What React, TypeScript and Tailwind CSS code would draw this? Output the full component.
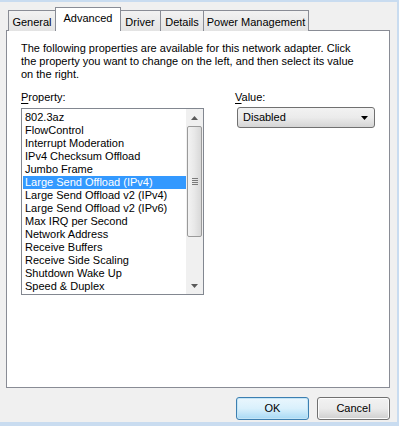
import React from "react";

const items = [
  "802.3az",
  "FlowControl",
  "Interrupt Moderation",
  "IPv4 Checksum Offload",
  "Jumbo Frame",
  "Large Send Offload (IPv4)",
  "Large Send Offload v2 (IPv4)",
  "Large Send Offload v2 (IPv6)",
  "Max IRQ per Second",
  "Network Address",
  "Receive Buffers",
  "Receive Side Scaling",
  "Shutdown Wake Up",
  "Speed & Duplex",
];

const tabs: { t: string; w: string }[] = [
  { t: "General", w: "w-[48px]" },
  { t: "Advanced", w: "w-[66px]" },
  { t: "Driver", w: "w-[42px]" },
  { t: "Details", w: "w-[44px]" },
  { t: "Power Management", w: "w-[106px]" },
];

export default function App() {
  return (
    <div
      className="w-[399px] h-[426px] bg-[#f0f0f0] relative overflow-hidden text-[11px] text-black"
      style={{ fontFamily: '"Liberation Sans", Arial, sans-serif' }}
    >
      <div className="h-[2px] bg-[#c9dcf0]" />
      <div className="absolute right-0 top-0 bottom-0 w-[2px] bg-[#c9dcf0]" />
      <div className="absolute left-0 right-0 bottom-0 h-[4px] bg-[#c9dcf0]" />

      <div className="pl-[6px] pr-[9px] pt-[5px]">
        {/* tabs */}
        <div className="flex items-end h-[24px] pl-[2px] relative z-10">
          {tabs.map(({ t, w }) =>
            t === "Advanced" ? (
              <div
                key={t}
                className={
                  w +
                  " h-[24px] -ml-[1px] -mr-[1px] border border-b-0 border-[#898c95] bg-white flex justify-center items-start pt-[3px] leading-[14px] relative z-10"
                }
              >
                {t}
              </div>
            ) : (
              <div
                key={t}
                className={
                  w +
                  " h-[21px] border border-b-0 border-[#898c95] bg-gradient-to-b from-[#f2f2f2] to-[#e3e3e3] flex justify-center items-center pt-[1px] leading-[14px] -ml-[1px] first:ml-0"
                }
              >
                {t}
              </div>
            )
          )}
        </div>
        {/* panel */}
        <div className="h-[358px] -mt-[1px] border border-[#898c95] bg-white px-[14px] pt-[11px]">
          <p className="leading-[13px] whitespace-nowrap">
            The following properties are available for this network adapter. Click
            <br />
            the property you want to change on the left, and then select its value
            <br />
            on the right.
          </p>
          <div className="flex mt-[10px]">
            <div className="w-[187px]">
              <div className="leading-[13px] h-[13px]">
                <span className="underline underline-offset-[2px]">P</span>roperty:
              </div>
              <div className="mt-[4px] h-[187px] border border-[#828790] flex">
                <div className="flex-1 pt-[2px] pl-[1px]">
                  {items.map((it) => (
                    <div
                      key={it}
                      className={
                        "h-[13px] leading-[13px] pl-[2px] whitespace-nowrap " +
                        (it === "Large Send Offload (IPv4)" ? "bg-[#3399ff] text-white" : "")
                      }
                    >
                      {it}
                    </div>
                  ))}
                </div>
                <div className="w-[17px] bg-[#f0f0f0] flex flex-col">
                  <div className="h-[17px] flex items-center justify-center">
                    <svg width="7" height="4" viewBox="0 0 7 4">
                      <path d="M3.5 0 L7 4 L0 4 Z" fill="#5a5a5a" />
                    </svg>
                  </div>
                  <div className="h-[111px] mx-[1px] border border-[#9a9a9a] rounded-[2px] bg-gradient-to-r from-[#f3f3f3] via-[#e8e8e8] to-[#d8d8d8] flex items-center justify-center">
                    <div className="flex flex-col gap-[1px]">
                      <div className="w-[6px] h-[1px] bg-[#7a7a7a]" />
                      <div className="w-[6px] h-[1px] bg-[#7a7a7a]" />
                      <div className="w-[6px] h-[1px] bg-[#7a7a7a]" />
                      <div className="w-[6px] h-[1px] bg-[#7a7a7a]" />
                    </div>
                  </div>
                  <div className="flex-1" />
                  <div className="h-[17px] flex items-center justify-center">
                    <svg width="7" height="4" viewBox="0 0 7 4">
                      <path d="M0 0 L7 0 L3.5 4 Z" fill="#5a5a5a" />
                    </svg>
                  </div>
                </div>
              </div>
            </div>
            <div className="ml-[33px]">
              <div className="leading-[13px] h-[13px] -ml-[2px]">
                <span className="underline underline-offset-[2px]">V</span>alue:
              </div>
              <div className="mt-[3px] w-[138px] h-[21px] border border-[#707070] rounded-[3px] bg-gradient-to-b from-[#f2f2f2] via-[#ebebeb] to-[#d5d5d5] flex items-center pl-[5px] pr-[6px]">
                <span className="flex-1 leading-[13px]">Disabled</span>
                <svg width="7" height="4" viewBox="0 0 7 4">
                  <path d="M0 0 L7 0 L3.5 4 Z" fill="#000" />
                </svg>
              </div>
            </div>
          </div>
        </div>
        {/* buttons */}
        <div className="flex justify-end gap-[8px] mt-[9px] pr-[0px]">
          <button className="w-[73px] h-[23px] rounded-[3px] border border-[#3c7fb1] bg-gradient-to-b from-[#eaf6fd] via-[#d9f0fc] to-[#a7d9f5] shadow-[inset_0_0_0_1px_#c4e5f6] leading-[13px]">
            OK
          </button>
          <button className="w-[73px] h-[23px] rounded-[3px] border border-[#707070] bg-gradient-to-b from-[#f2f2f2] via-[#ebebeb] to-[#cfcfcf] shadow-[inset_0_0_0_1px_#fcfcfc] leading-[13px]">
            Cancel
          </button>
        </div>
      </div>
    </div>
  );
}
